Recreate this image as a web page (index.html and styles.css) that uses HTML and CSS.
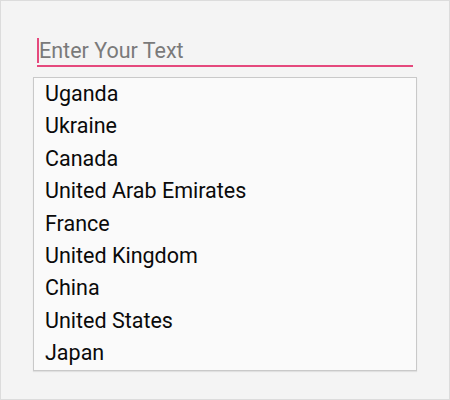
FILE: index.html
```html
<!DOCTYPE html>
<html>
<head>
<meta charset="utf-8">
<link rel="stylesheet" href="styles.css">
</head>
<body>
<div class="frame">
  <div class="field">
    <span class="caret"></span><span class="placeholder">Enter Your Text</span>
  </div>
  <ul class="list">
    <li>Uganda</li>
    <li>Ukraine</li>
    <li>Canada</li>
    <li>United Arab Emirates</li>
    <li>France</li>
    <li>United Kingdom</li>
    <li>China</li>
    <li>United States</li>
    <li>Japan</li>
  </ul>
</div>
</body>
</html>
```
FILE: styles.css
```css
html, body {
  margin: 0;
  padding: 0;
}
body {
  font-family: Roboto, "Liberation Sans", sans-serif;
}
.frame {
  width: 450px;
  height: 400px;
  box-sizing: border-box;
  border: 1px solid #dcdcdc;
  background: #f4f4f4;
  padding: 37px 0 0 32px;
}
.field {
  margin-left: 4px;
  width: 376px;
  height: 27px;
  border-bottom: 2px solid #e5497d;
  display: flex;
  align-items: flex-start;
}
.caret {
  width: 2px;
  height: 25px;
  background: #e5497d;
  flex: none;
}
.placeholder {
  font-size: 21.5px;
  line-height: 25px;
  color: #7a7a7a;
}
.list {
  list-style: none;
  margin: 10px 0 0 0;
  padding: 0;
  width: 384px;
  box-sizing: border-box;
  border: 1px solid #c9c9c9;
  background: #fafafa;
  box-shadow: 0 1px 1px rgba(0,0,0,0.08);
}
.list li {
  font-size: 21.5px;
  line-height: 32.4px;
  padding-left: 11px;
  color: #0a0a0a;
}
```
